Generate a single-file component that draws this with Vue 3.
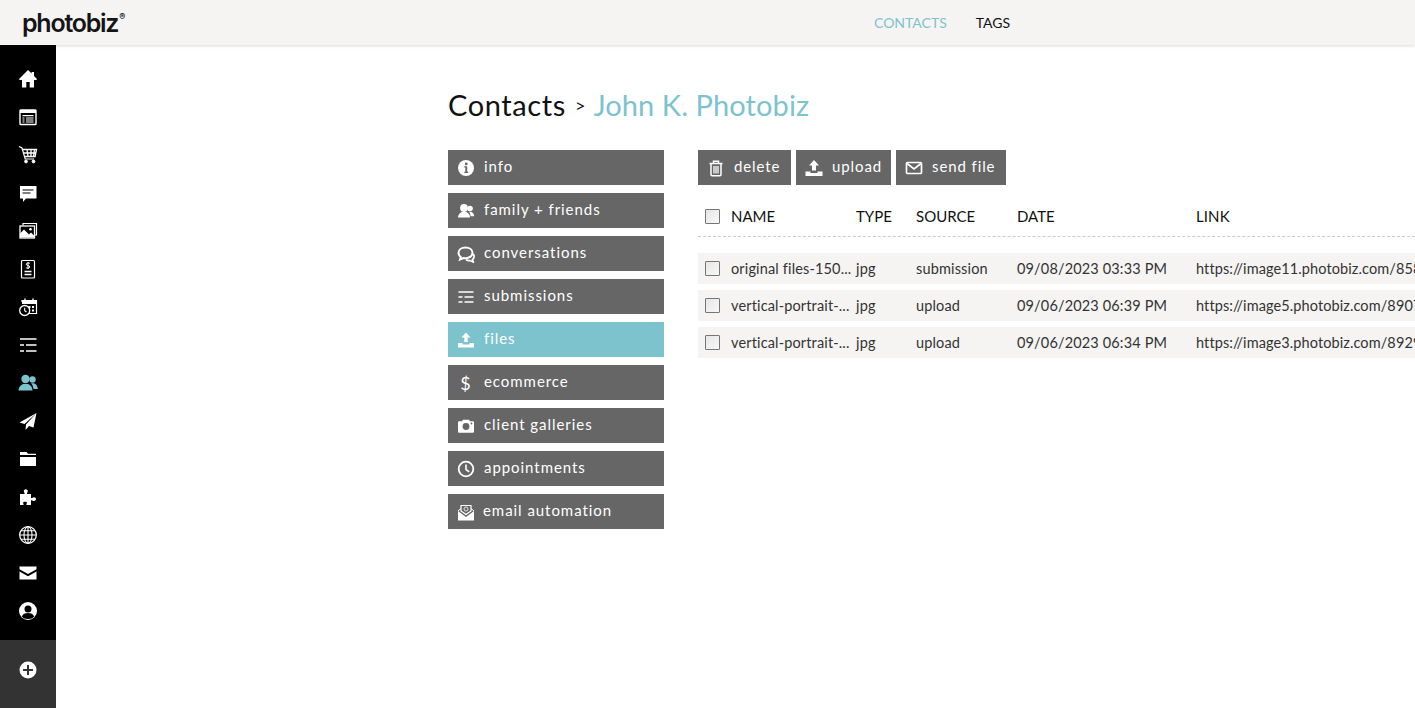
<script setup>
const sideIcons = [
  { id: 'home' }, { id: 'site' }, { id: 'cart' }, { id: 'chat' }, { id: 'gallery' },
  { id: 'invoice' }, { id: 'calendar' }, { id: 'list' }, { id: 'people', active: true }, { id: 'send' },
  { id: 'folder' }, { id: 'puzzle' }, { id: 'globe' }, { id: 'mail' }, { id: 'user' }
]
const menu = [
  { label: 'info', icon: 'info' },
  { label: 'family + friends', icon: 'people' },
  { label: 'conversations', icon: 'talk' },
  { label: 'submissions', icon: 'list' },
  { label: 'files', icon: 'upload', active: true },
  { label: 'ecommerce', icon: 'dollar' },
  { label: 'client galleries', icon: 'camera' },
  { label: 'appointments', icon: 'clock' },
  { label: 'email automation', icon: 'auto', tight: true }
]
const actions = [
  { label: 'delete', icon: 'trash', cls: 'a1' },
  { label: 'upload', icon: 'upload', cls: 'a2' },
  { label: 'send file', icon: 'env', cls: 'a3' }
]
const rows = [
  { name: 'original files-150...', type: 'jpg', source: 'submission', date: '09/08/2023 03:33 PM', link: 'https://image11.photobiz.com/8583021/original-files-1500.jpg' },
  { name: 'vertical-portrait-...', type: 'jpg', source: 'upload', date: '09/06/2023 06:39 PM', link: 'https://image5.photobiz.com/8907734/vertical-portrait-02.jpg' },
  { name: 'vertical-portrait-...', type: 'jpg', source: 'upload', date: '09/06/2023 06:34 PM', link: 'https://image3.photobiz.com/8929116/vertical-portrait-01.jpg' }
]
</script>

<template>
  <div class="page">
    <header class="top">
      <div class="logo">photobiz<sup class="reg">®</sup></div>
      <nav class="topnav">
        <a class="on">CONTACTS</a>
        <a>TAGS</a>
      </nav>
    </header>
    <div class="body">
      <aside class="side">
        <div class="side-list">
          <div v-for="s in sideIcons" :key="s.id" class="side-item" :class="{ act: s.active }">
            <svg width="20" height="20" viewBox="0 0 20 20">
              <g v-if="s.id === 'home'" fill="currentColor"><path d="M10 1 1 10l.6.9H4V18.500h4.300V13h3.400v5.500H16V10.900h2.400l.6-.9-3-3V3h-2.400v1.600L10 1Z"/></g>
              <g v-else-if="s.id === 'site'"><rect x="2" y="3" width="16" height="14.500" rx=".8" fill="none" stroke="currentColor" stroke-width="1.400"/><path d="M2 3h16v3H2z" fill="currentColor"/><path d="M4.500 8.600h11M4.500 11h2M8 11h7.500M4.500 13h2M8 13h7.500M4.500 15h2M8 15h7.500" stroke="currentColor" stroke-width="1.100"/></g>
              <g v-else-if="s.id === 'cart'" fill="none" stroke="currentColor"><path d="M1 1.500 4 3l3.200 11h9" stroke-width="1.200"/><path d="M5 4.500h13.500l-1.400 7H7M9 4.500l1 7M13 4.500v7M16.500 4.500l-1 7M6 8h12" stroke-width="1.300"/><circle cx="8" cy="16.500" r="1.400" fill="currentColor"/><circle cx="15.500" cy="16.500" r="1.400" fill="currentColor"/></g>
              <g v-else-if="s.id === 'chat'"><path d="M2 3h16.500v12.500H8l-3 3.500v-3.500H2Z" fill="currentColor"/><path d="M4.500 7h11M4.500 10h8" stroke="#000" stroke-width="1.200"/></g>
              <g v-else-if="s.id === 'gallery'"><path d="M5 4.500V2.500h13.500v11.500h-1.500" fill="none" stroke="currentColor" stroke-width="1.200"/><rect x="2" y="5" width="14.500" height="12" fill="none" stroke="currentColor" stroke-width="1.300"/><path d="M2 16.500v-4l4-4 5 5 2-2 3.500 3.500v1.500Z" fill="currentColor"/><circle cx="12.500" cy="8.300" r="1.300" fill="currentColor"/></g>
              <g v-else-if="s.id === 'invoice'"><rect x="3.500" y="1.500" width="13" height="17.500" rx="1" fill="none" stroke="currentColor" stroke-width="1.200"/><path d="M6.500 12.500h7M6.500 15.500h7" stroke="currentColor" stroke-width="1.300"/><path d="M12 4.500c-.5-.8-3.500-1-3.800.6-.3 1.900 3.800 1 3.600 3-.2 1.500-3.300 1.300-3.900.4M10 3v7" fill="none" stroke="currentColor" stroke-width="1"/></g>
              <g v-else-if="s.id === 'calendar'"><path d="M4 5V3.500h14.500V16.500H10" fill="none" stroke="currentColor" stroke-width="1.200"/><path d="M4 4h14.500v3H4z" fill="currentColor"/><path d="M7 1.500v3M15 1.500v3" stroke="currentColor" stroke-width="1.400"/><path d="M10.500 9h2v2h-2zM14 9h2v2h-2zM14 12.500h2v2h-2z" fill="currentColor"/><circle cx="6.700" cy="13.500" r="5" fill="#000" stroke="currentColor" stroke-width="1.300"/><path d="M6.700 10.700v3l1.800 1.300" fill="none" stroke="currentColor" stroke-width="1.100"/></g>
              <g v-else-if="s.id === 'list'" stroke="currentColor" stroke-width="1.700"><path d="M2 4h16.500M2 10h4M8 10h10.500M2 16h4M8 16h10.500"/></g>
              <g v-else-if="s.id === 'people'" fill="currentColor"><circle cx="7.500" cy="6" r="4.200"/><path d="M.5 17.500c0-3.500 2.500-5.500 4.500-6.500h5c2.500 1 4.500 3 4.500 6.500Z"/><circle cx="14.500" cy="6.500" r="3.200"/><path d="M13 10.300h3c2 .8 3.800 2.700 3.800 5.700H15.500c0-2-1-4-2.500-5.700Z"/></g>
              <g v-else-if="s.id === 'send'" fill="currentColor"><path d="M18.500 2 1.500 11.500l5 1.500ZM18.500 2 8 13.500l-.5 5.500 3.500-4 4.500 1.500Z"/></g>
              <g v-else-if="s.id === 'folder'" fill="currentColor"><path d="M2 3h6.500l1.500 1.700H18V6H2ZM2 8h16v9H2Z"/></g>
              <g v-else-if="s.id === 'puzzle'" fill="currentColor"><path d="M2 7h4.500c.6-.8-.7-1.500-.7-3 0-1.100 1-1.800 2-1.800s2 .7 2 1.800c0 1.500-1.300 2.200-.7 3H13v4c1 .6 1.500-.7 3-.7 1.100 0 2 .8 2 1.800s-.9 1.900-2 1.900c-1.500 0-2-1.200-3-.6V18H8.500c-.5-1 .6-1.400.4-2.500-.2-1-3.500-1-3.800 0-.2 1.100.9 1.500.4 2.500H2Z"/></g>
              <g v-else-if="s.id === 'globe'" fill="none" stroke="currentColor" stroke-width="1.100"><circle cx="10" cy="10" r="8.300" stroke-width="1.300"/><ellipse cx="10" cy="10" rx="4" ry="8.300"/><path d="M10 1.700v16.600M1.700 10h16.600M3 5.800h14M3 14.200h14"/></g>
              <g v-else-if="s.id === 'mail'" fill="currentColor"><path d="M1.500 3.500h17v2.700L10 11 1.500 6.200ZM1.500 8.500 10 13.300l8.500-4.800v8h-17Z"/></g>
              <g v-else-if="s.id === 'user'"><circle cx="10" cy="10" r="9" fill="currentColor"/><circle cx="10" cy="8" r="3.500" fill="#000"/><path d="M3.800 15.800c.8-2.800 3.200-3.800 6.200-3.800s5.400 1 6.200 3.800A8 8 0 0 1 10 18a8 8 0 0 1-6.200-2.200Z" fill="#000"/></g>
            </svg>
          </div>
        </div>
        <div class="side-add">
          <svg width="18" height="18" viewBox="0 0 18 18"><circle cx="9" cy="9" r="8.500" fill="#fff"/><path d="M4 9h10M9 4v10" stroke="#333" stroke-width="2"/></svg>
        </div>
      </aside>

      <main class="main">
        <h1 class="title"><span class="crumb">Contacts</span><span class="sep">&gt;</span><span class="who">John K. Photobiz</span></h1>
        <div class="cols">
          <div class="menu">
            <div v-for="m in menu" :key="m.label" class="mbtn" :class="{ active: m.active, tight: m.tight }">
              <svg class="mi" width="18" height="18" viewBox="0 0 18 18">
                <g v-if="m.icon === 'info'"><circle cx="9" cy="9" r="8" fill="#fff"/><path d="M7.300 7.300H10.200v5.500h1v1.200H7.300v-1.200h1V8.500h-1Z" fill="#666"/><circle cx="9.200" cy="4.900" r="1.400" fill="#666"/></g>
                <g v-else-if="m.icon === 'people'" fill="#fff"><circle cx="7" cy="6" r="3.900"/><path d="M1 15.500c0-3 2-4.700 3.800-5.500h4.400c2 .8 3.800 2.500 3.800 5.500Z"/><circle cx="13" cy="6.500" r="2.800"/><path d="M12 9.700h2.200c1.700.7 3 2.200 3 4.600h-3.700c0-1.600-.5-3.300-1.500-4.600Z"/></g>
                <g v-else-if="m.icon === 'talk'" fill="none" stroke="#fff"><path d="M8.500 2.500c-4 0-7 2.200-7 5.300 0 1.700 1 3.200 2.300 4.200L3 14.500l3.500-1.500c.7.200 1.300.2 2 .2 4 0 7-2.300 7-5.400s-3-5.300-7-5.300Z" stroke-width="2"/><path d="M16.500 9c1 2.500.5 4.500-1 5.500l.7 2.500-3.400-1.500c-1.500.2-2.800-.2-3.800-1" stroke-width="1.700"/></g>
                <g v-else-if="m.icon === 'list'" stroke="#fff" stroke-width="1.700"><path d="M1.500 4h15M1.500 9h4M7.500 9h9M1.500 14h4M7.500 14h9"/></g>
                <g v-else-if="m.icon === 'upload'" fill="#fff"><path d="M9 1.500 13.500 6.500H10.700V11H7.300V6.500H4.500Z"/><path d="M1 12h4.500v1.500h7V12H17v4.500H1Z"/></g>
                <g v-else-if="m.icon === 'camera'" fill="#fff"><path d="M1 5.500c0-.8.600-1.300 1.300-1.300H5L6 2.800h6l1 1.400h2.700c.7 0 1.300.5 1.300 1.300v9c0 .8-.6 1.300-1.300 1.300H2.300C1.600 15.800 1 15.300 1 14.500Z"/><circle cx="9" cy="9.500" r="3.400" fill="#666"/><circle cx="14.500" cy="6.500" r=".9" fill="#666"/></g>
                <g v-else-if="m.icon === 'clock'" fill="none" stroke="#fff"><circle cx="9" cy="9" r="7.300" stroke-width="1.800"/><path d="M9 4.500V9.500l3.200 2.300" stroke-width="1.600"/></g>
                <g v-else-if="m.icon === 'auto'"><path d="M1 8 9 14l8-6v9.500H1Z" fill="#fff"/><path d="M4 8V2.500h10V8L9 11.500Z" fill="none" stroke="#fff" stroke-width="1.200"/><circle cx="9" cy="6" r="2" fill="none" stroke="#fff" stroke-width=".8"/><path d="M1 8 4 5.500M17 8l-3-2.500" stroke="#fff"/></g>
                <text v-else-if="m.icon === 'dollar'" x="9" y="15.500" text-anchor="middle" class="dollar">$</text>
              </svg>
              <span class="ml">{{ m.label }}</span>
            </div>
          </div>

          <div class="right">
            <div class="actions">
              <div v-for="a in actions" :key="a.label" class="abtn" :class="a.cls">
                <svg width="18" height="18" viewBox="0 0 18 18">
                  <g v-if="a.icon === 'trash'" fill="none" stroke="#fff"><path d="M2.500 4.500h13M6.500 4V2.300h5V4" stroke-width="1.500"/><path d="M4 5v10.500c0 .8.400 1.200 1 1.200h8c.6 0 1-.4 1-1.200V5" stroke-width="1.500"/><path d="M7 7v7.500M9 7v7.500M11 7v7.500" stroke-width="1.300"/></g>
                  <g v-else-if="a.icon === 'upload'" fill="#fff"><path d="M9 1 14 6.500H11V11.500H7V6.500H4Z"/><path d="M.5 12.500h5v1.500h7v-1.500h5V17H.5Z"/></g>
                  <g v-else fill="none" stroke="#fff" stroke-width="1.700"><rect x="1.500" y="3.500" width="15" height="11" rx="1"/><path d="m2 4.500 7 5.500 7-5.500"/></g>
                </svg>
                <span>{{ a.label }}</span>
              </div>
            </div>
            <div class="thead">
              <span class="cb"></span>
              <span class="c-name">NAME</span>
              <span class="c-type">TYPE</span>
              <span class="c-src">SOURCE</span>
              <span class="c-date">DATE</span>
              <span class="c-link">LINK</span>
            </div>
            <div class="rows">
              <div v-for="(r, i) in rows" :key="i" class="row">
                <span class="cb"></span>
                <span class="c-name">{{ r.name }}</span>
                <span class="c-type">{{ r.type }}</span>
                <span class="c-src">{{ r.source }}</span>
                <span class="c-date">{{ r.date }}</span>
                <span class="c-link">{{ r.link }}</span>
              </div>
            </div>
          </div>
        </div>
      </main>
    </div>
  </div>
</template>

<style>
html, body { margin: 0; background: #fff; overflow: hidden; }
</style>

<style scoped>
.page { width: 1415px; height: 708px; overflow: hidden; font-family: Lato, "Open Sans", sans-serif; color: #111; position: relative; }
.top { height: 45px; background: #f5f4f2; box-shadow: 0 1px 3px rgba(0,0,0,.15); display: flex; align-items: center; position: relative; z-index: 2; }
.logo { margin-left: 22px; width: 104px; font-family: Inter, sans-serif; font-weight: 600; font-size: 25px; letter-spacing: -1.25px; color: #151515; line-height: 44px; white-space: nowrap; }
.reg { font-size: 9px; font-weight: 700; vertical-align: 12px; line-height: 0; letter-spacing: 0; margin-left: 1px; }
.topnav { position: absolute; left: 874px; top: 0; display: flex; gap: 29px; font-size: 14px; line-height: 46px; }
.topnav .on { color: #7cc3ce; }
.body { display: flex; height: 663px; }
.side { width: 56px; flex: none; background: #000; display: flex; flex-direction: column; justify-content: space-between; }
.side-list { padding-top: 15px; display: flex; flex-direction: column; }
.side-item { height: 38px; display: flex; align-items: center; justify-content: center; color: #fff; }
.side-item.act { color: #7cc3ce; }
.side-add { height: 68px; background: #333; display: flex; align-items: center; justify-content: center; padding-bottom: 8px; box-sizing: border-box; }
.main { flex: 1; min-width: 0; padding-left: 392px; }
.title { margin: 42px 0 0; font-weight: 400; font-size: 29px; line-height: 36px; white-space: nowrap; color: #111; display: flex; align-items: center; }
.crumb { letter-spacing: .6px; }
.sep { font-size: 18px; margin: 0 8px 0 9px; }
.who { color: #7cc3ce; letter-spacing: .1px; }
.cols { display: flex; margin-top: 27px; }
.menu { width: 216px; flex: none; display: flex; flex-direction: column; gap: 8px; }
.mbtn { height: 35px; background: #666; color: #fff; display: flex; align-items: center; padding-left: 9px; font-size: 15px; letter-spacing: .95px; }
.ml, .abtn span { position: relative; top: -2px; }
.mbtn.active { background: #7cc3ce; }
.mi { flex: none; margin-right: 9px; }
.mbtn.tight .mi { margin-right: 8px; }
.dollar { font-family: Lato, sans-serif; font-size: 18px; fill: #fff; }
.right { margin-left: 34px; flex: 1; min-width: 0; overflow: hidden; }
.actions { display: flex; gap: 5px; }
.abtn { height: 35px; background: #666; color: #fff; display: flex; align-items: center; gap: 9px; padding-left: 9px; box-sizing: border-box; font-size: 15px; letter-spacing: .9px; }
.a1 { width: 93px; }
.a2 { width: 95px; }
.a3 { width: 110px; }
.thead { display: flex; align-items: center; height: 52px; padding-top: 11px; box-sizing: border-box; border-bottom: 1px dashed #ccc; font-size: 15px; color: #111; }
.rows { margin-top: 16px; display: flex; flex-direction: column; gap: 6px; }
.row { display: flex; align-items: center; height: 31px; background: #f5f4f2; font-size: 14.5px; color: #333; letter-spacing: .15px; }
.cb { width: 13px; height: 13px; flex: none; margin-left: 7px; border: 1px solid #767676; border-radius: 1px; background: linear-gradient(135deg, #e6e6e6, #f8f8f8); }
.thead span:not(.cb), .row span:not(.cb) { white-space: nowrap; flex: none; }
.c-name { width: 125px; margin-left: 11px; }
.c-type { width: 60px; }
.c-src { width: 101px; }
.c-date { width: 179px; }
.c-link { width: 420px; letter-spacing: .1px; }
</style>
